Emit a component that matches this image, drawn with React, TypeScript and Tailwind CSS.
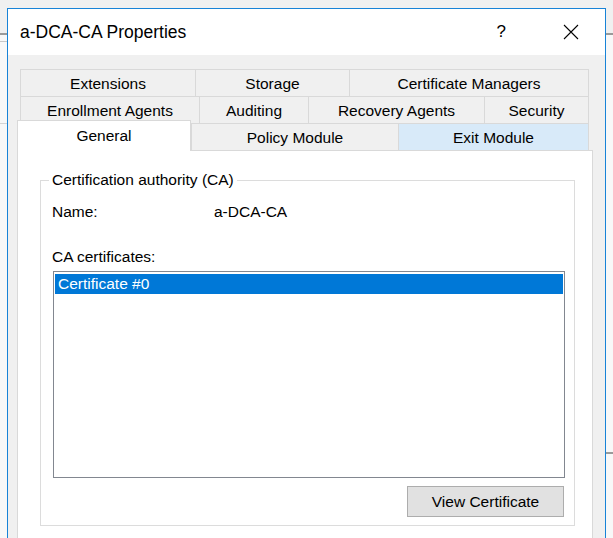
const font = { fontFamily: '"Liberation Sans", Arial, sans-serif' };

interface TabProps {
  label: string;
  className: string;
}

const Tab = (props: TabProps) => {
  return (
    <div
      className={
        "flex items-center justify-center border-t border-l border-[#d9d9d9] text-[15.5px] text-black leading-none " +
        props.className
      }
    >
      {props.label}
    </div>
  );
};

const CloseIcon = () => (
  <svg width="16" height="16" viewBox="0 0 16 16" fill="none">
    <path d="M1 1 L15 15 M15 1 L1 15" stroke="#000" strokeWidth="1.1" />
  </svg>
);

export default function App() {
  return (
    <div className="relative w-[613px] h-[538px] overflow-hidden bg-[#f8f8f8]" style={font}>
      {/* desktop behind the dialog */}
      <div className="h-[35px] bg-[#f0f0f0] border-b-2 border-[#9a9a9a]" />
      <div className="absolute left-0 top-[41px] w-[7px] h-px bg-[#c8c8c8]" />
      <div className="absolute left-0 top-[123px] w-[7px] h-px bg-[#d4d4d4]" />
      <div className="absolute right-0 top-[452px] w-[8px] h-[2px] bg-[#9a9a9a]" />

      {/* dialog window */}
      <div className="absolute left-[7px] top-[8px] w-[599px] h-[560px] border border-[#1883d7] bg-[#f0f0f0] flex flex-col">
        <div className="h-[46px] bg-white flex items-center pl-[12px] pr-[26px]">
          <span className="text-[17.5px] text-black flex-1">a-DCA-CA Properties</span>
          <span className="text-[17px] text-black font-light mr-[57px]">?</span>
          <CloseIcon />
        </div>

        <div className="pt-[14px] pl-[12px] flex flex-col">
          <div className="flex h-[27px]">
            <Tab label="Extensions" className="w-[175px] pt-[2px]" />
            <Tab label="Storage" className="w-[154px] pt-[2px]" />
            <Tab label="Certificate Managers" className="w-[240px] pt-[2px] border-r" />
          </div>
          <div className="flex h-[27px]">
            <Tab label="Enrollment Agents" className="w-[179px] pt-[2px]" />
            <Tab label="Auditing" className="w-[109px] pt-[2px]" />
            <Tab label="Recovery Agents" className="w-[176px] pt-[2px]" />
            <Tab label="Security" className="w-[105px] pt-[2px] border-r" />
          </div>
          <div className="flex items-end h-[27px] -ml-[3px]">
            <div className="relative z-10 -mb-px h-[31px] w-[174px] bg-white border-t border-l border-r border-[#d9d9d9] flex justify-center pt-[7px] text-[15.5px] text-black leading-none">
              General
            </div>
            <Tab label="Policy Module" className="w-[207px] h-[27px] pt-[1px]" />
            <Tab label="Exit Module" className="w-[191px] h-[27px] pt-[1px] border-r bg-[#d8eaf9]" />
          </div>

          <div className="-ml-[3px] w-[576px] h-[400px] bg-white border border-[#d9d9d9] pl-[22px] pt-[19px]">
            <fieldset className="w-[535px] border border-[#dcdcdc] pb-[8px] text-[15.5px] text-black">
              <legend className="ml-[8px] px-[3px] leading-[20px]">Certification authority (CA)</legend>
              <div className="flex mt-[12px] pl-[11px] leading-[20px]">
                <span className="w-[162px]">Name:</span>
                <span>a-DCA-CA</span>
              </div>
              <div className="mt-[25px] pl-[11px] leading-[20px]">CA certificates:</div>
              <div className="mt-[4px] ml-[12px] w-[512px] h-[207px] border border-[#828790] pt-[2px] px-px">
                <div className="h-[20px] bg-[#0078d7] text-white pl-[3px] leading-[20px]">Certificate #0</div>
              </div>
              <div className="flex justify-end pr-[10px] mt-[8px]">
                <button className="w-[157px] h-[31px] bg-[#e1e1e1] border border-[#adadad] text-[15.5px] text-black">
                  View Certificate
                </button>
              </div>
            </fieldset>
          </div>
        </div>
      </div>
    </div>
  );
}
